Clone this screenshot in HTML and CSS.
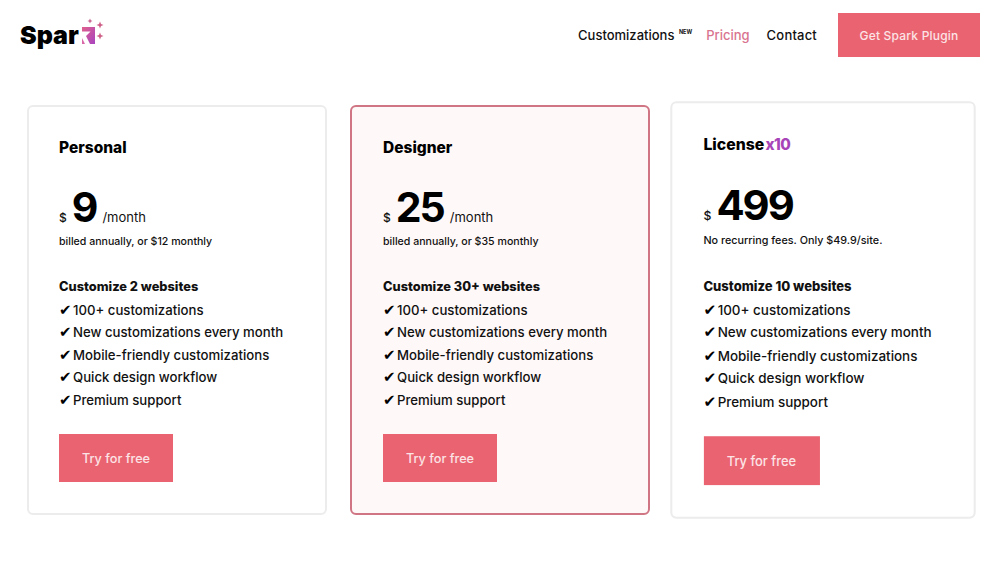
FILE: index.html
```html
<!DOCTYPE html>
<html>
<head>
  <meta charset="UTF-8">
  <title>Spark - Pricing</title>
  <link rel="stylesheet" href="styles.css">
</head>
<body>
  <div class="header">
    <div class="logo">
      <span class="logo-text">Spar</span>
      <svg class="logo-icon" width="24" height="26" viewBox="0 0 24 26">
        <defs>
          <linearGradient id="logoGrad" x1="0" y1="0" x2="1" y2="1">
            <stop offset="0" stop-color="#e0608c"/>
            <stop offset="1" stop-color="#a844c0"/>
          </linearGradient>
        </defs>
        <path d="M0 9H13V26H8L4 18L8.500 13.500H0Z" fill="url(#logoGrad)"/>
        <path d="M0 20L3 26H0Z" fill="#d868a8"/>
        <path d="M8 0.500L8.800 2.200L10.500 3L8.800 3.800L8 5.500L7.200 3.800L5.500 3L7.200 2.200Z" fill="#c9648f"/>
        <path d="M18 3.500L19 6L21.500 7L19 8L18 10.500L17 8L14.500 7L17 6Z" fill="#cf5f88"/>
        <path d="M18 14.500L19 17L21.500 18L19 19L18 21.500L17 19L14.500 18L17 17Z" fill="#cf5f88"/>
      </svg>
    </div>
    <div class="nav">
      <a class="nav-link nav-first">Customizations <sup class="nav-new">NEW</sup></a>
      <a class="nav-link nav-active">Pricing</a>
      <a class="nav-link nav-last">Contact</a>
      <a class="btn btn-nav">Get Spark Plugin</a>
    </div>
  </div>

  <div class="plans">
    <div class="plan">
      <h2 class="plan-title">Personal</h2>
      <div class="plan-price">
        <span class="price-currency">$</span>
        <span class="price-amount">9</span>
        <span class="price-period">/month</span>
      </div>
      <p class="plan-note">billed annually, or $12 monthly</p>
      <ul class="plan-features">
        <li class="feature-lead">Customize 2 websites</li>
        <li><span class="check">✔</span>100+ customizations</li>
        <li><span class="check">✔</span>New customizations every month</li>
        <li><span class="check">✔</span>Mobile-friendly customizations</li>
        <li><span class="check">✔</span>Quick design workflow</li>
        <li><span class="check">✔</span>Premium support</li>
      </ul>
      <a class="btn btn-plan">Try for free</a>
    </div>

    <div class="plan plan-featured">
      <h2 class="plan-title">Designer</h2>
      <div class="plan-price">
        <span class="price-currency">$</span>
        <span class="price-amount">25</span>
        <span class="price-period">/month</span>
      </div>
      <p class="plan-note">billed annually, or $35 monthly</p>
      <ul class="plan-features">
        <li class="feature-lead">Customize 30+ websites</li>
        <li><span class="check">✔</span>100+ customizations</li>
        <li><span class="check">✔</span>New customizations every month</li>
        <li><span class="check">✔</span>Mobile-friendly customizations</li>
        <li><span class="check">✔</span>Quick design workflow</li>
        <li><span class="check">✔</span>Premium support</li>
      </ul>
      <a class="btn btn-plan">Try for free</a>
    </div>

    <div class="plan plan-raised">
      <h2 class="plan-title">License <span class="plan-multi">x10</span></h2>
      <div class="plan-price">
        <span class="price-currency">$</span>
        <span class="price-amount">499</span>
      </div>
      <p class="plan-note">No recurring fees. Only $49.9/site.</p>
      <ul class="plan-features">
        <li class="feature-lead">Customize 10 websites</li>
        <li><span class="check">✔</span>100+ customizations</li>
        <li><span class="check">✔</span>New customizations every month</li>
        <li><span class="check">✔</span>Mobile-friendly customizations</li>
        <li><span class="check">✔</span>Quick design workflow</li>
        <li><span class="check">✔</span>Premium support</li>
      </ul>
      <a class="btn btn-plan">Try for free</a>
    </div>
  </div>
</body>
</html>
```

FILE: styles.css
```css
body {
  font-family: 'Inter', 'Open Sans', sans-serif;
  margin: 0;
  background-color: #fff;
  color: #111;
}
.header {
  display: flex;
  justify-content: space-between;
  align-items: center;
  height: 44px;
  padding: 13px 20px 0 20px;
}
.logo {
  display: flex;
  align-items: center;
}
.logo-text {
  font-size: 25px;
  font-weight: 900;
  color: #000;
}
.logo-icon {
  margin-left: 3px;
  margin-top: -9px;
}
.nav {
  display: flex;
  align-items: center;
}
.nav-link {
  font-size: 13px;
  font-weight: 500;
  color: #111;
  margin-right: 17px;
  white-space: nowrap;
}
.nav-first {
  margin-right: 14px;
}
.nav-last {
  letter-spacing: 0.2px;
  margin-right: 21px;
}
.nav-active {
  color: #d9748f;
}
.nav-new {
  font-size: 5.5px;
  font-weight: 700;
  vertical-align: 6px;
  line-height: 0;
  margin-left: 1px;
}
.btn {
  display: flex;
  justify-content: center;
  align-items: center;
  background-color: #ea6371;
  color: #fce4e6;
  font-weight: 500;
  box-sizing: border-box;
}
.btn-nav {
  width: 142px;
  height: 44px;
  font-size: 12px;
  letter-spacing: 0.2px;
}
.plans {
  display: flex;
  gap: 23px;
  margin-top: 48px;
  padding: 0 0 46px 27px;
}
.plan {
  width: 300px;
  height: 410px;
  box-sizing: border-box;
  padding: 31px 30px 0 30px;
  background-color: #fff;
  border: 2px solid #ececec;
  border-radius: 6px;
}
.plan-featured {
  padding-left: 31px;
  background-color: #fff8f8;
  border-color: #cf7583;
}
.plan-raised {
  padding-left: 30.5px;
  transform: scale(1.018);
}
.plan-title {
  font-size: 15.5px;
  line-height: 20px;
  font-weight: 800;
  margin: 0;
  color: #000;
}
.plan-multi {
  color: #a744b8;
  font-size: 15px;
  font-weight: 800;
  letter-spacing: -0.6px;
  margin-left: -2px;
}
.plan-price {
  display: flex;
  align-items: baseline;
  height: 50px;
  margin-top: 24px;
}
.price-currency {
  font-size: 12px;
  font-weight: 500;
  margin-right: 5px;
}
.price-amount {
  font-size: 41px;
  line-height: 50px;
  font-weight: 700;
  letter-spacing: -2px;
  color: #000;
  margin-right: 6px;
}
.price-period {
  font-size: 13px;
}
.plan-note {
  font-size: 10.6px;
  line-height: 14px;
  font-weight: 500;
  margin: 3px 0 0 0;
}
.plan-features {
  list-style: none;
  margin: 27px 0 0 0;
  padding: 0;
}
.plan-features li {
  font-size: 13.2px;
  line-height: 22.5px;
  font-weight: 450;
  white-space: nowrap;
}
.plan-features .feature-lead {
  font-weight: 800;
  font-size: 12.8px;
}
.check {
  display: inline-block;
  width: 14px;
  font-size: 15px;
  font-family: 'DejaVu Sans', sans-serif;
  color: #000;
  line-height: 1;
}
.btn-plan {
  width: 114px;
  height: 48px;
  margin-top: 23px;
  font-size: 12.7px;
}
```
